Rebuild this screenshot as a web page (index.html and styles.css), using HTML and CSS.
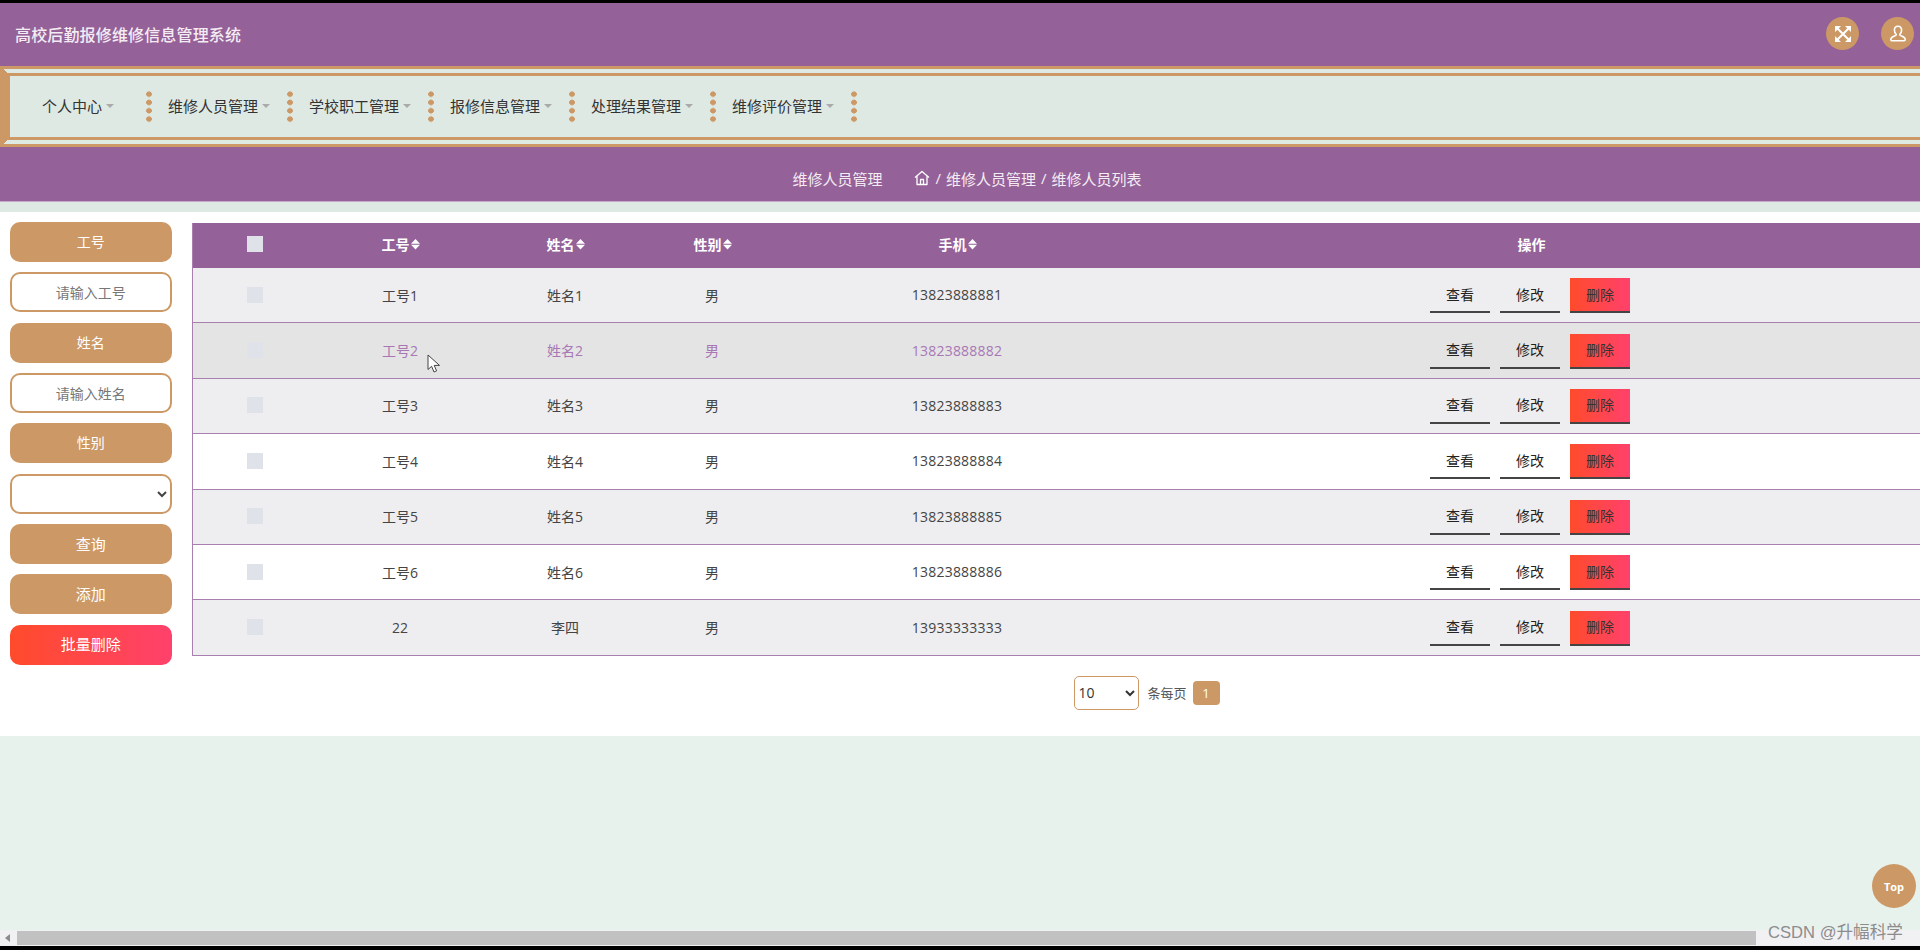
FILE: index.html
```html
<!DOCTYPE html>
<html lang="zh-CN">
<head>
<meta charset="utf-8">
<title>高校后勤报修维修信息管理系统</title>
<link rel="stylesheet" href="styles.css">
</head>
<body>
<div class="screen">
  <div class="capture-edge capture-top"></div>
  <header class="topbar">
    <div class="brand">高校后勤报修维修信息管理系统</div>
    <div class="top-actions">
      <button class="round-btn" aria-label="全屏">
        <svg width="18" height="18" viewBox="0 0 18 18"><path class="ico-line" d="M3 3l12 12M15 3L3 15"/><path class="ico-fill" d="M1 1h6L1 7zM17 1v6l-6-6zM1 17v-6l6 6zM17 17h-6l6-6z"/></svg>
      </button>
      <button class="round-btn" aria-label="用户">
        <svg width="20" height="20" viewBox="0 0 20 20"><path class="ico-stroke" d="M10 2.200c-2.200 0-3.600 1.700-3.600 3.900 0 1.600.6 3 1.600 3.900.4.4.3 1.100-.2 1.400-1.400.8-4.800 1.300-5 3.900 0 .8.300 1.400 1 1.400h12.400c.7 0 1-.6 1-1.400-.2-2.600-3.600-3.100-5-3.900-.5-.3-.6-1-.2-1.400 1-.9 1.600-2.300 1.600-3.900 0-2.200-1.400-3.900-3.600-3.900z"/></svg>
      </button>
    </div>
  </header>

  <nav class="mainnav">
    <a class="nav-item nav-first">个人中心<i class="caret"></i></a><span class="dots"></span>
    <a class="nav-item">维修人员管理<i class="caret"></i></a><span class="dots"></span>
    <a class="nav-item">学校职工管理<i class="caret"></i></a><span class="dots"></span>
    <a class="nav-item">报修信息管理<i class="caret"></i></a><span class="dots"></span>
    <a class="nav-item">处理结果管理<i class="caret"></i></a><span class="dots"></span>
    <a class="nav-item">维修评价管理<i class="caret"></i></a><span class="dots"></span>
  </nav>

  <div class="crumbbar">
    <span class="crumb-title">维修人员管理</span>
    <span class="crumbs">
      <svg class="home" width="16" height="16" viewBox="0 0 16 16"><path class="ico-stroke thin" d="M1 7.500L8 1.500l7 6M3 6.200V14.500h10V6.200M6.500 14.500V9.500h3v5"/></svg>
      <span>/</span><span>维修人员管理</span><span>/</span><span>维修人员列表</span>
    </span>
  </div>
  <div class="band"></div>

  <main class="content">
    <aside class="filters">
      <div class="chip">工号</div>
      <input class="field" placeholder="请输入工号">
      <div class="chip">姓名</div>
      <input class="field" placeholder="请输入姓名">
      <div class="chip">性别</div>
      <select class="field field-select"><option></option><option>男</option><option>女</option></select>
      <button class="chip chip-action">查询</button>
      <button class="chip chip-action">添加</button>
      <button class="chip chip-action chip-danger">批量删除</button>
    </aside>

    <section class="table">
      <div class="row head">
        <div class="cell"><input type="checkbox" class="check"></div>
        <div class="cell">工号<svg class="sort" width="9" height="11" viewBox="0 0 9 11"><path d="M4.500 0L9 4.800H0zM0 5.800h9L4.500 10.600z"/></svg></div>
        <div class="cell">姓名<svg class="sort" width="9" height="11" viewBox="0 0 9 11"><path d="M4.500 0L9 4.800H0zM0 5.800h9L4.500 10.600z"/></svg></div>
        <div class="cell">性别<svg class="sort" width="9" height="11" viewBox="0 0 9 11"><path d="M4.500 0L9 4.800H0zM0 5.800h9L4.500 10.600z"/></svg></div>
        <div class="cell">手机<svg class="sort" width="9" height="11" viewBox="0 0 9 11"><path d="M4.500 0L9 4.800H0zM0 5.800h9L4.500 10.600z"/></svg></div>
        <div class="cell">操作</div>
      </div>
      <div class="row grey">
        <div class="cell"><input type="checkbox" class="check"></div><div class="cell">工号1</div><div class="cell">姓名1</div><div class="cell">男</div><div class="cell phone">13823888881</div>
        <div class="cell ops"><button class="op">查看</button><button class="op">修改</button><button class="op op-del">删除</button></div>
      </div>
      <div class="row hover">
        <div class="cell"><input type="checkbox" class="check"></div><div class="cell">工号2</div><div class="cell">姓名2</div><div class="cell">男</div><div class="cell phone">13823888882</div>
        <div class="cell ops"><button class="op">查看</button><button class="op">修改</button><button class="op op-del">删除</button></div>
      </div>
      <div class="row grey">
        <div class="cell"><input type="checkbox" class="check"></div><div class="cell">工号3</div><div class="cell">姓名3</div><div class="cell">男</div><div class="cell phone">13823888883</div>
        <div class="cell ops"><button class="op">查看</button><button class="op">修改</button><button class="op op-del">删除</button></div>
      </div>
      <div class="row">
        <div class="cell"><input type="checkbox" class="check"></div><div class="cell">工号4</div><div class="cell">姓名4</div><div class="cell">男</div><div class="cell phone">13823888884</div>
        <div class="cell ops"><button class="op">查看</button><button class="op">修改</button><button class="op op-del">删除</button></div>
      </div>
      <div class="row grey">
        <div class="cell"><input type="checkbox" class="check"></div><div class="cell">工号5</div><div class="cell">姓名5</div><div class="cell">男</div><div class="cell phone">13823888885</div>
        <div class="cell ops"><button class="op">查看</button><button class="op">修改</button><button class="op op-del">删除</button></div>
      </div>
      <div class="row">
        <div class="cell"><input type="checkbox" class="check"></div><div class="cell">工号6</div><div class="cell">姓名6</div><div class="cell">男</div><div class="cell phone">13823888886</div>
        <div class="cell ops"><button class="op">查看</button><button class="op">修改</button><button class="op op-del">删除</button></div>
      </div>
      <div class="row grey">
        <div class="cell"><input type="checkbox" class="check"></div><div class="cell">22</div><div class="cell">李四</div><div class="cell">男</div><div class="cell phone">13933333333</div>
        <div class="cell ops"><button class="op">查看</button><button class="op">修改</button><button class="op op-del">删除</button></div>
      </div>
      <div class="pager">
        <select class="page-size"><option>10</option><option>20</option></select>
        <span class="page-label">条每页</span>
        <span class="page-num">1</span>
      </div>
    </section>
  </main>

  <div class="spacer"></div>

  <div class="scrollbar">
    <span class="scroll-arrow"></span>
    <span class="scroll-thumb"></span>
  </div>
  <div class="capture-edge capture-bottom"></div>

  <button class="to-top">Top</button>
  <div class="watermark">CSDN @升幅科学</div>
  <svg class="cursor" width="14" height="20" viewBox="0 0 14 20"><path d="M1 1v14.500l3.600-3.200 2.400 5.700 2.600-1.100-2.400-5.500H12.500z"/></svg>
</div>
</body>
</html>
```

FILE: styles.css
```css
* { box-sizing: border-box; }

html, body {
  margin: 0;
  height: 100%;
  overflow: hidden;
}

body {
  font-family: "Open Sans", "Noto Sans CJK SC", sans-serif;
  font-size: 14px;
  color: #444;
  background: #e8f2ed;
}

button, input, select {
  font-family: inherit;
  font-size: 14px;
}

.screen {
  position: relative;
  width: 1920px;
  height: 950px;
  display: flex;
  flex-direction: column;
  overflow: hidden;
}

.capture-edge { background: #000; flex: none; }
.capture-top { height: 3px; }
.capture-bottom { height: 4px; }

/* top bar */
.topbar {
  flex: none;
  height: 63px;
  background: #946199;
  display: flex;
  align-items: center;
  justify-content: space-between;
  padding: 0 6px 2px 15px;
}

.brand {
  font-size: 16px;
  font-weight: 500;
  letter-spacing: .15px;
  color: #f4ecf3;
}

.top-actions {
  display: flex;
  gap: 22px;
}

.round-btn {
  width: 33px;
  height: 33px;
  padding: 0;
  border: 0;
  border-radius: 50%;
  background: #cc9966;
  display: flex;
  align-items: center;
  justify-content: center;
}

.ico-line { stroke: #fff; stroke-width: 2; fill: none; }
.ico-fill { fill: #fff; }
.ico-stroke { stroke: #fff; stroke-width: 1.600; fill: none; stroke-linejoin: round; }
.ico-stroke.thin { stroke-width: 1.300; }

/* main nav */
.mainnav {
  flex: none;
  height: 81px;
  display: flex;
  align-items: center;
  background: #dfe9e4;
  border-style: double none double solid;
  border-color: #cc9966;
  border-width: 10px 0 10px 10px;
}

.nav-item {
  display: flex;
  align-items: center;
  padding: 0 17px 2px 16px;
  font-size: 15px;
  color: #333;
}

.nav-first { padding: 0 32px 2px 32px; }

.caret {
  width: 0;
  height: 0;
  margin-left: 4px;
  border-style: solid;
  border-width: 4px 4px 0;
  border-color: #aaa transparent transparent;
}

.dots {
  width: 6px;
  height: 33px;
  background: radial-gradient(circle at center, #cc9966 2.600px, transparent 3px) center top / 6px 8.300px repeat-y;
}

/* breadcrumb */
.crumbbar {
  flex: none;
  height: 55px;
  background: #946199;
  border-bottom: 1px solid #c5abc9;
  display: flex;
  align-items: center;
  justify-content: center;
  gap: 32px;
  padding: 8px 0 0 14px;
  color: #f4ecf3;
  font-size: 15px;
}

.crumbs {
  display: flex;
  align-items: center;
  gap: 5px;
}

.home { flex: none; }

.band {
  flex: none;
  height: 10px;
  background: #dfe9e4;
}

/* content */
.content {
  flex: none;
  height: 524px;
  background: #fff;
  display: flex;
  align-items: flex-start;
  gap: 20.500px;
  padding: 10px 0 0 10px;
}

.filters {
  flex: none;
  width: 161.500px;
  display: flex;
  flex-direction: column;
  gap: 10.350px;
}

.chip, .field {
  width: 100%;
  height: 40px;
  border-radius: 10px;
  text-align: center;
}

.chip {
  display: flex;
  align-items: center;
  justify-content: center;
  padding: 0 0 2px;
  border: 0;
  background: #cc9966;
  color: #fff;
}

.chip-action { font-size: 15px; }

.chip-danger { background: linear-gradient(to right, #ff4b2b, #ff416c); }

.field {
  border: 2px solid #cc9966;
  background: #fff;
  color: #444;
  outline: none;
}

.field::placeholder { color: #777; opacity: 1; }

.field-select { padding: 0 2px; }

/* table */
.table {
  flex: none;
  width: 1734px;
  padding-top: .500px;
}

.row {
  display: grid;
  grid-template-columns: 123px 168px 162px 132px 358px 790px;
  height: 55.400px;
  background: #fff;
  border-left: 1px solid #a97fb0;
  border-bottom: 1px solid #a97fb0;
}

.row.grey { background: #eeeef0; }
.row.hover { background: #e4e4e5; color: #a877b4; }

.row.head {
  height: 45.500px;
  background: #946199;
  border-bottom: 0;
  color: #fff;
  font-weight: 700;
}

.cell {
  display: flex;
  align-items: center;
  justify-content: center;
  padding-bottom: 1px;
}

.row.head .cell { padding: 0 0 2px 1px; }

.phone {
  letter-spacing: .2px;
  color: inherit;
}

.sort {
  margin-left: 1px;
  fill: #fff;
}

.check {
  appearance: none;
  width: 16px;
  height: 16px;
  margin: 0;
  background: #dfe2e8;
}

.ops {
  gap: 10px;
  padding: 1px 2px 0 0;
}

.op {
  width: 60px;
  height: 35px;
  padding: 0 0 2px;
  background: transparent;
  border: 0;
  border-bottom: 2px solid #444;
  color: #222;
}

.op-del { background: linear-gradient(to right, #ff4b2b, #ff416c); color: #333; }

/* pager */
.pager {
  display: flex;
  align-items: center;
  height: 34px;
  margin-top: 20px;
  padding-left: 881.500px;
}

.page-size {
  width: 65px;
  height: 34px;
  padding: 0;
  background: #fff;
  border: 1px solid #cc9966;
  border-radius: 5px;
  color: #333;
  outline: none;
}

.page-label {
  margin-left: 9px;
  font-size: 13px;
  color: #555;
}

.page-num {
  width: 27px;
  height: 24px;
  margin-left: 6px;
  border-radius: 4px;
  background: #cc9966;
  color: #fff;
  font-size: 13px;
  display: flex;
  align-items: center;
  justify-content: center;
}

.spacer { flex: 1; }

/* fake horizontal scrollbar of the captured window */
.scrollbar {
  flex: none;
  height: 16px;
  background: #f1f0f3;
  display: flex;
  align-items: center;
  padding-left: 5px;
}

.scroll-arrow {
  width: 0;
  height: 0;
  border-style: solid;
  border-width: 4.500px 5px 4.500px 0;
  border-color: transparent #8b8b8b transparent transparent;
}

.scroll-thumb {
  width: 1739px;
  height: 14px;
  margin-left: 7px;
  background: #c1c1c1;
}

/* overlays */
.to-top {
  position: absolute;
  left: 1872px;
  top: 864px;
  width: 44px;
  height: 44px;
  padding: 0;
  border: 0;
  border-radius: 50%;
  background: #cc9966;
  color: #fff;
  font-size: 11px;
  font-weight: 700;
}

.watermark {
  position: absolute;
  left: 1768px;
  top: 922px;
  font-family: "Liberation Sans", "Noto Sans CJK SC", sans-serif;
  font-size: 16.600px;
  line-height: 22px;
  color: #8c8c8c;
  white-space: nowrap;
}

.cursor {
  position: absolute;
  left: 427px;
  top: 354px;
}

.cursor path {
  fill: #fff;
  stroke: #444;
  stroke-width: 1;
}
```
